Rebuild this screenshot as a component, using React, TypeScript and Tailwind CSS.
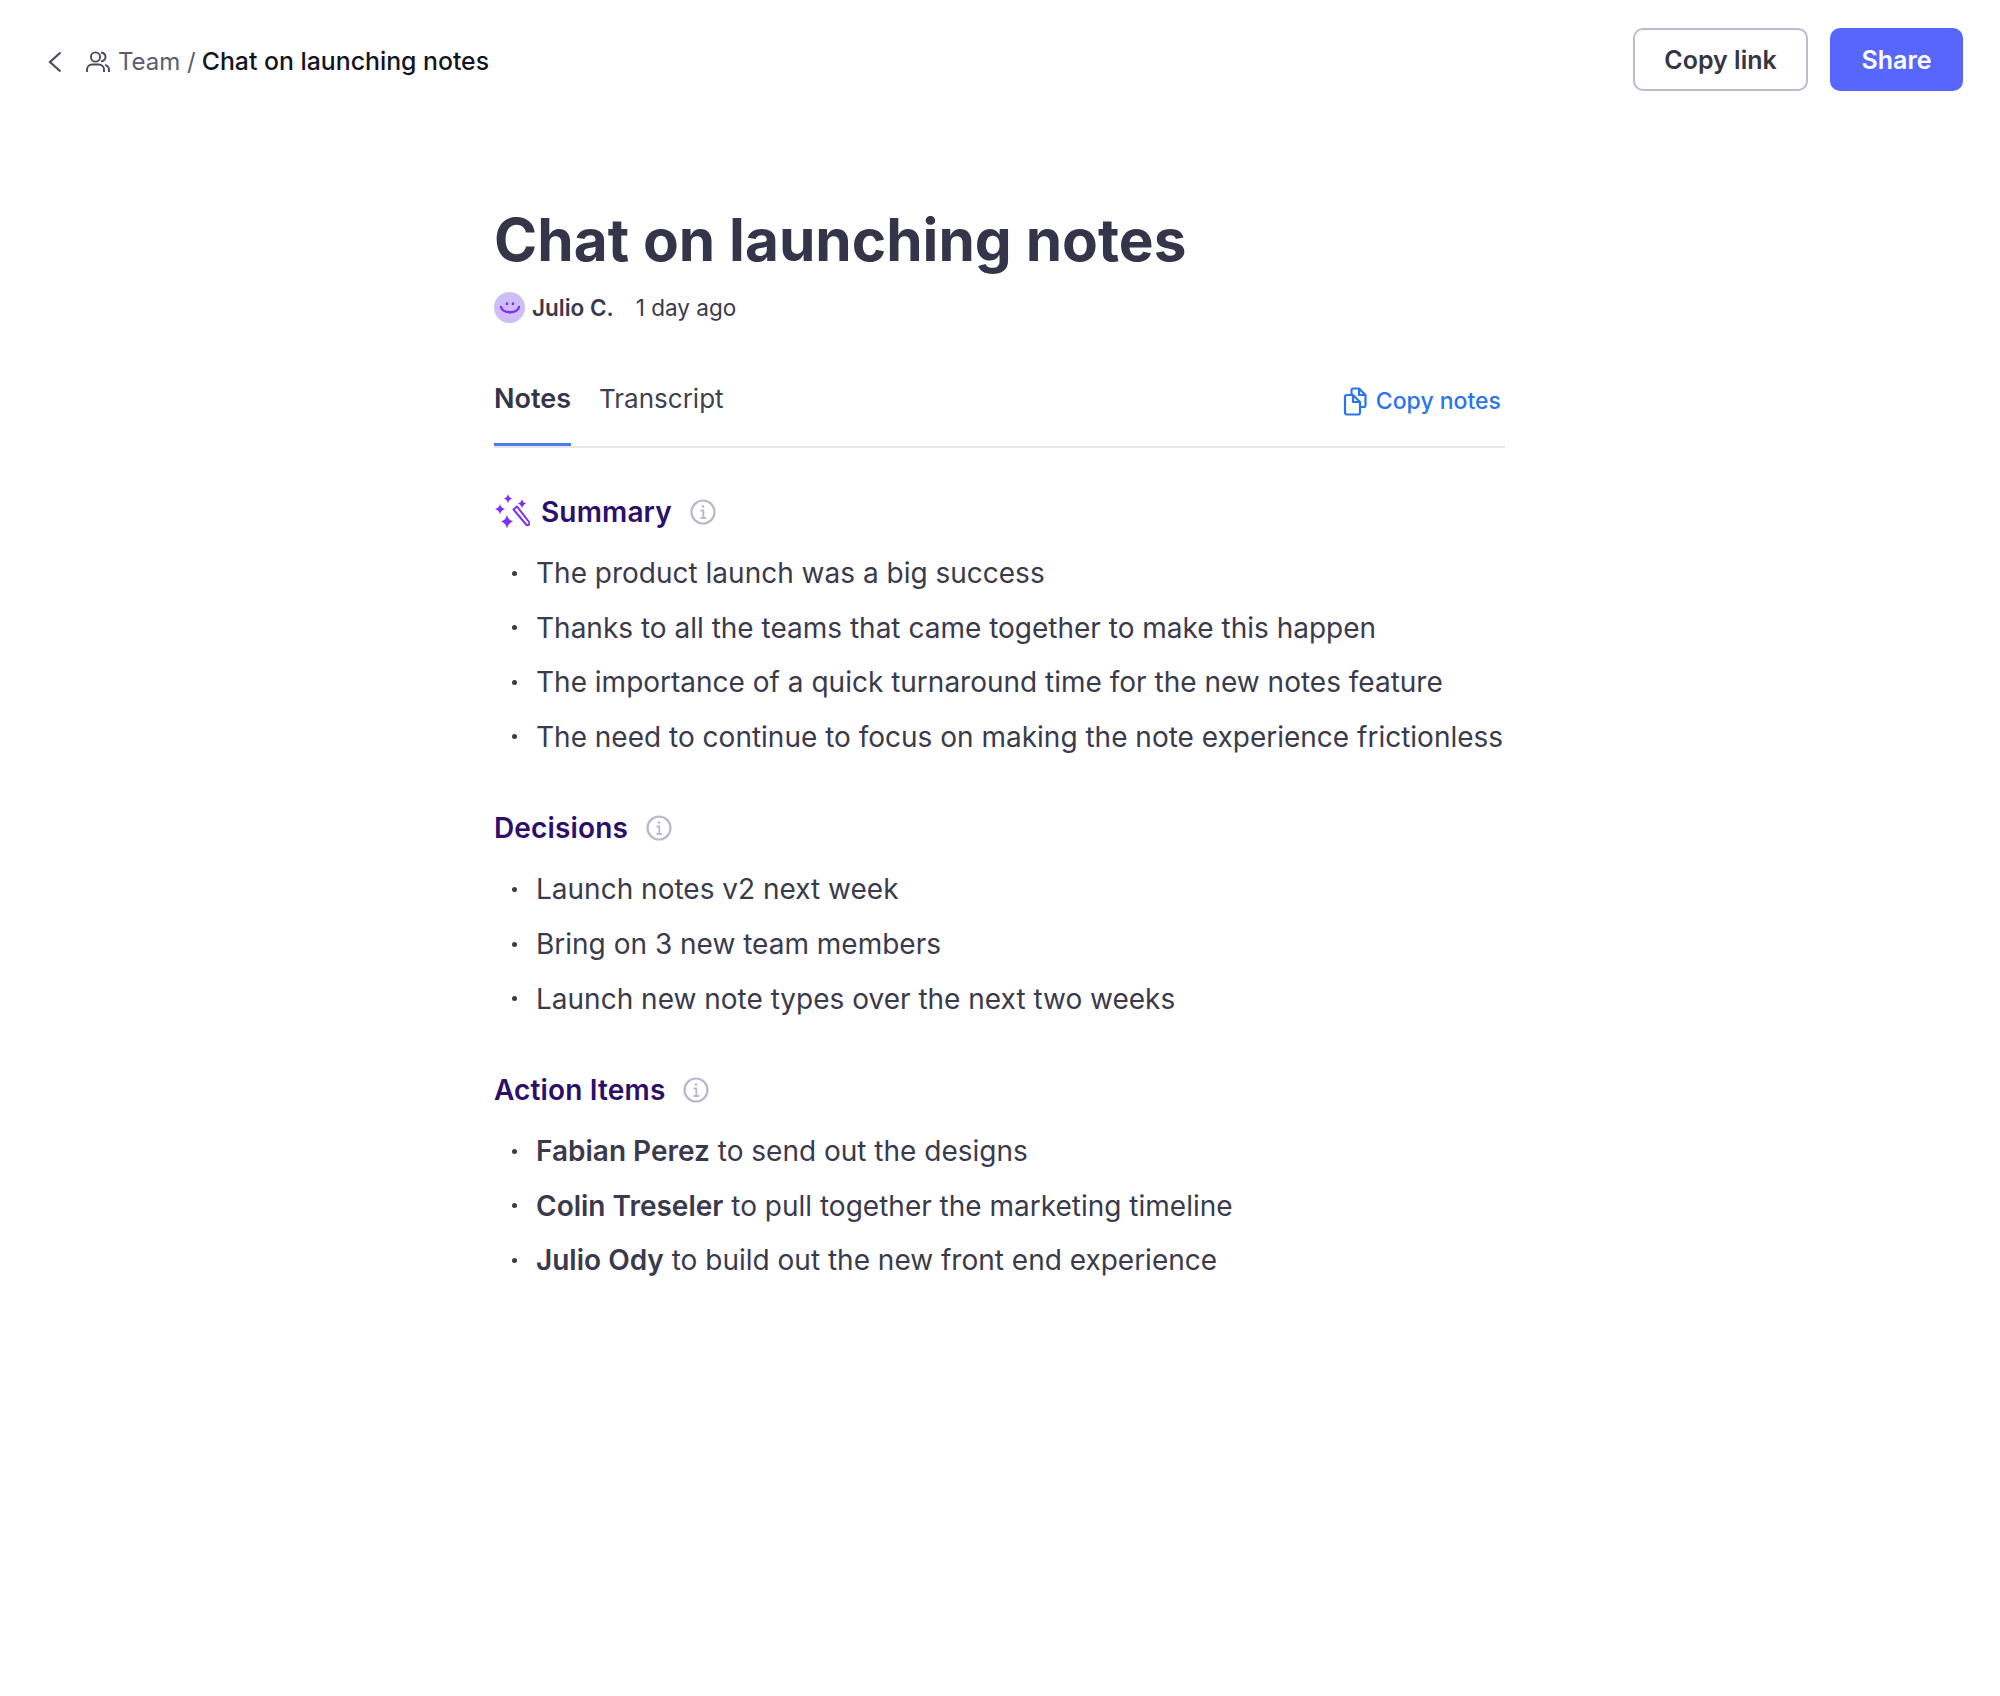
function InfoIcon() {
  return (
    <svg width="26" height="26" viewBox="0 0 26 26" fill="none" stroke="#b9b7cf" strokeWidth="2.2">
      <circle cx="13" cy="13" r="11.500" />
      <path d="M10.500 11.500H13.300V19M10.500 19H16" strokeWidth="1.800" />
      <circle cx="13" cy="7.500" r="1.300" fill="#b9b7cf" stroke="none" />
    </svg>
  );
}

function WandIcon() {
  return (
    <svg width="36" height="36" viewBox="0 0 36 36" fill="#7c2fff">
      <path d="M14 0q.8 4 4.500 4.500Q14.800 5.300 14 9.500 13.200 5.300 9.500 4.500 13.200 4 14 0z" />
      <path d="M28 5q.8 4 4.500 4.500Q28.800 10.300 28 14.500 27.200 10.300 23.500 9.500 27.200 9 28 5z" />
      <path d="M6 10q.8 4 5 5Q6.800 16 6 20.500 5.200 16 1 15 5.200 14 6 10z" />
      <path d="M13 21q1 5 6 6.500Q14 29 13 34.500 12 29 7 27.500 12 26 13 21z" />
      <path
        d="M19.500 15.500l3.500-3 12 15.500c.8 1 .6 2-.2 2.700-.9.800-2 .6-2.700-.2z"
        fill="none"
        stroke="#7c2fff"
        strokeWidth="2"
        strokeLinejoin="round"
      />
    </svg>
  );
}

function CopyIcon() {
  return (
    <svg width="24" height="29" viewBox="0 0 24 29" fill="none" stroke="#2b74f0" strokeWidth="2.200" strokeLinejoin="round">
      <path d="M2 10a2 2 0 0 1 2-2h6l7 7v10.500a2 2 0 0 1-2 2H4a2 2 0 0 1-2-2z" />
      <path d="M8.500 8V3.500a2 2 0 0 1 2-2h5.500l6.500 6.500v10a2 2 0 0 1-2 2H17" />
      <path d="M10 8v7h7M16 1.500V8h6.500" />
    </svg>
  );
}

function Section({ title, icon, items }: { title: string; icon?: boolean; items: React.ReactNode[] }) {
  return (
    <section className="mb-[46px]">
      <div className="flex items-center h-[36px]">
        {icon && (
          <span className="mr-[11px] flex">
            <WandIcon />
          </span>
        )}
        <h3 className="text-[28px] font-semibold tracking-[0.15px] text-[#2b0f6b]">{title}</h3>
        <span className="ml-[18px] flex">
          <InfoIcon />
        </span>
      </div>
      <ul className="mt-[16px]">
        {items.map((item, i) => (
          <li key={i} className="flex items-center h-[54.6px] text-[28px] text-[#3a3a4c] whitespace-nowrap">
            <span className="shrink-0 w-[5px] h-[5px] rounded-full bg-[#3a3a4c] ml-[18px] mr-[19px]" />
            <span>{item}</span>
          </li>
        ))}
      </ul>
    </section>
  );
}

export default function App() {
  return (
    <div className="min-h-[1696px] bg-white font-['Inter',sans-serif]">
      {/* Header */}
      <header className="flex items-center justify-between pl-[47px] pr-[37px] pt-[28px]">
        <div className="flex items-center h-[63px] pt-[5px]">
          <svg width="16" height="22" viewBox="0 0 16 22" fill="none" stroke="#4b4b5e" strokeWidth="2.200">
            <path d="M13.500 1.500L3 11l10.500 9.500" />
          </svg>
          <svg className="ml-[23px]" width="24" height="22" viewBox="0 0 24 22" fill="none" stroke="#4b4b5e" strokeWidth="1.900">
            <circle cx="9.500" cy="6" r="4.600" />
            <path d="M1 21v-2.500C1 15.500 3.500 13.500 6 13.500h7c2.500 0 5 2 5 5V21" />
            <path d="M15 1.500c2.800.4 4.500 2.300 4.500 4.500S17.800 10 15 10.500M19 13.800c2.300.7 4 2.500 4 4.900V21" />
          </svg>
          <span className="ml-[8px] text-[24px] text-[#5c5c70]">Team /</span>
          <span className="ml-[6px] text-[24.800px] font-medium text-[#14141f]">Chat on launching notes</span>
        </div>
        <div className="flex gap-[22px]">
          <button className="w-[175px] h-[63px] pt-[2px] rounded-[10px] border-2 border-[#bcb9d0] text-[25px] font-semibold text-[#353546]">
            Copy link
          </button>
          <button className="w-[133px] h-[63px] pt-[2px] rounded-[10px] bg-[#5767fd] text-[25px] font-semibold text-white">
            Share
          </button>
        </div>
      </header>

      {/* Content */}
      <main className="w-[1011px] ml-[494px] mt-[113px]">
        <h1 className="text-[58.500px] leading-[72px] font-bold text-[#35354a]">Chat on launching notes</h1>
        <div className="flex items-center mt-[15px] text-[22.500px] text-[#3a3a4c]">
          <span className="w-[31px] h-[31px] rounded-full bg-[#cfbdf5] flex items-center justify-center">
            <svg width="22" height="16" viewBox="0 0 22 16" fill="none" stroke="#7c2fff" strokeWidth="2.400" strokeLinecap="round">
              <path d="M2 7c1.500 7 16.500 7 18 0" />
              <path d="M8 3.500v.5M14 3.500v.5" />
            </svg>
          </span>
          <span className="ml-[7px] font-semibold">Julio C.</span>
          <span className="ml-[22px]">1 day ago</span>
        </div>

        {/* Tabs */}
        <div className="flex items-end justify-between mt-[54px] h-[69px] border-b-2 border-[#e6e6ee]">
          <div className="flex gap-[28px] h-[69px]">
            <div className="w-[77px] h-[69px] pt-[2px] border-b-[3px] border-[#4a7fe8] -mb-[2px] text-[27px] font-semibold text-[#35354a]">
              Notes
            </div>
            <div className="pt-[2px] text-[26px] leading-[40px] text-[#3f3f52]">Transcript</div>
          </div>
          <div className="flex items-center gap-[9px] pb-[27px] pr-[4px] text-[23px] font-medium text-[#2b74f0]">
            <CopyIcon />
            Copy notes
          </div>
        </div>

        <div className="mt-[46px]">
          <Section
            title="Summary"
            icon
            items={[
              'The product launch was a big success',
              'Thanks to all the teams that came together to make this happen',
              'The importance of a quick turnaround time for the new notes feature',
              'The need to continue to focus on making the note experience frictionless',
            ]}
          />
          <Section
            title="Decisions"
            items={['Launch notes v2 next week', 'Bring on 3 new team members', 'Launch new note types over the next two weeks']}
          />
          <Section
            title="Action Items"
            items={[
              <><b className="font-semibold">Fabian Perez</b> to send out the designs</>,
              <><b className="font-semibold">Colin Treseler</b> to pull together the marketing timeline</>,
              <><b className="font-semibold">Julio Ody</b> to build out the new front end experience</>,
            ]}
          />
        </div>
      </main>
    </div>
  );
}
